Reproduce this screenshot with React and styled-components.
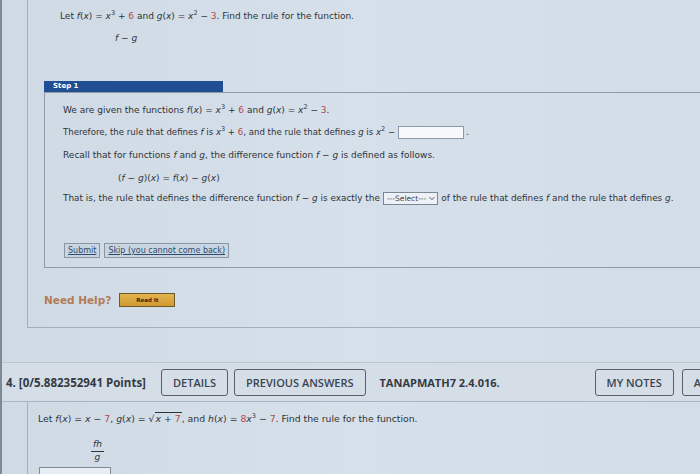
import React from 'react';
import styled, { createGlobalStyle } from 'styled-components';

const GlobalStyle = createGlobalStyle`
  html, body {
    margin: 0;
    padding: 0;
    background: #d2dde8;
  }
  body {
    font-family: "DejaVu Sans", Verdana, sans-serif;
    color: #2f3338;
  }
`;

const Page = styled.div`
  width: 700px;
  height: 474px;
  overflow: hidden;
  box-sizing: border-box;
  border-left: 2px solid #7d8996;
  background: linear-gradient(90deg, #cfdae5 0%, #d6e0ea 50%, #d2dde8 100%);
`;

const Panel = styled.div`
  margin-left: 25px;
  height: 328px;
  box-sizing: border-box;
  border-left: 1px solid #a4afba;
  border-bottom: 1px solid #a4afba;
  padding: 11px 0 0 32px;
`;

const Text = styled.div`
  font-size: ${p => p.$size || 9}px;
  line-height: 11px;
  margin: ${p => p.$m || '0'};
  padding-left: ${p => p.$indent || 0}px;
  white-space: nowrap;
`;

const I = styled.i`
  font-style: italic;
`;

const Red = styled.span`
  color: #b5464f;
`;

const Sup = styled.sup`
  font-size: 6.5px;
  line-height: 0;
  vertical-align: 4px;
`;

const StepBox = styled.div`
  margin: 37px 0 0 -16px;
`;

const StepTab = styled.div`
  width: 179px;
  height: 11px;
  background: #1f4f92;
  color: #fff;
  font-size: 7px;
  font-weight: bold;
  line-height: 11px;
  padding-left: 9px;
  box-sizing: border-box;
`;

const StepBody = styled.div`
  border-top: 1px solid #8e9aa6;
  border-left: 1px solid #8e9aa6;
  border-bottom: 1px solid #8e9aa6;
  height: 176px;
  box-sizing: border-box;
  padding: 12px 0 0 18px;
`;

const Blank = styled.span`
  display: inline-block;
  width: 66px;
  height: 13px;
  box-sizing: border-box;
  background: #f6f8fa;
  border: 1px solid #8d99a6;
  vertical-align: middle;
  margin: -3px 2px -3px 3px;
`;

const Select = styled.span`
  display: inline-flex;
  align-items: center;
  gap: 3px;
  height: 13px;
  box-sizing: border-box;
  padding: 0 2px 0 3px;
  border: 1px solid #7a8896;
  background: #eef2f6;
  font-size: 7.5px;
  vertical-align: middle;
  margin: -3px 3px;
  color: #3a3f46;
`;

const ButtonRow = styled.div`
  display: flex;
  gap: 4px;
  margin-top: 39px;
  margin-left: 1px;
`;

const SmallButton = styled.span`
  display: inline-block;
  padding: 0 3px;
  height: 13px;
  line-height: 13px;
  font-size: 8px;
  color: #2e4a70;
  text-decoration: underline;
  background: #c9d5e0;
  border: 1px solid #8896a5;
`;

const HelpRow = styled.div`
  display: flex;
  align-items: center;
  gap: 8px;
  margin: 25px 0 0 -16px;
`;

const HelpLabel = styled.span`
  font-family: "DejaVu Sans", sans-serif;
  font-weight: bold;
  font-size: 10.5px;
  color: #b27c58;
`;

const ReadIt = styled.span`
  display: inline-block;
  width: 56px;
  height: 14px;
  box-sizing: border-box;
  border: 1px solid #6d5a2a;
  background: linear-gradient(#e2b450, #d19a32);
  font-size: 5.5px;
  font-weight: bold;
  text-align: center;
  line-height: 12px;
  color: #3a2a10;
`;

const QHeader = styled.div`
  margin-top: 34px;
  width: 820px;
  height: 38px;
  display: flex;
  align-items: center;
  border-top: 1px solid #bcc6d0;
  border-bottom: 1px solid #a9b4bf;
  background: #d5dee7;
  font-family: "Open Sans", sans-serif;
  color: #343a42;
  padding-left: 4px;
`;

const QTitle = styled.span`
  font-weight: bold;
  font-size: 11.5px;
  width: 155px;
  flex-shrink: 0;
`;

const HeaderButton = styled.span`
  display: inline-flex;
  align-items: center;
  justify-content: center;
  height: 27px;
  box-sizing: border-box;
  padding: 0 11px;
  margin-right: ${p => p.$mr || 6}px;
  border: 1.5px solid #56606b;
  border-radius: 3px;
  font-size: 11px;
  font-weight: 600;
  color: #3a4451;
  white-space: nowrap;
  flex-shrink: 0;
`;

const Code = styled.span`
  font-weight: bold;
  font-size: 11px;
  margin-left: 8px;
  width: 215px;
  flex-shrink: 0;
`;

const QBody = styled.div`
  margin-left: 25px;
  border-left: 1px solid #a4afba;
  height: 80px;
  padding: 11px 0 0 10px;
`;

const Sqrt = styled.span`
  white-space: nowrap;
`;

const Radicand = styled.span`
  border-top: 1px solid #2f3338;
  padding: 0 1px;
`;

const Frac = styled.div`
  display: inline-flex;
  flex-direction: column;
  align-items: center;
  margin: 15px 0 0 53px;
  font-size: 9px;
  font-style: italic;
  line-height: 11px;
`;

const FracTop = styled.span`
  border-bottom: 1px solid #2f3338;
  padding: 0 2px 1px;
`;

const AnswerBox = styled.div`
  width: 70px;
  height: 14px;
  margin: 4px 0 0 1px;
  border: 1px solid #7e8a97;
  background: #e8edf2;
`;

const Chevron = () => (
  <svg width="6" height="5" viewBox="0 0 6 5">
    <path d="M0.5 1 L3 3.8 L5.5 1" fill="none" stroke="#4a5868" strokeWidth="0.9" />
  </svg>
);

export default function App() {
  return (
    <>
      <GlobalStyle />
      <Page>
        <Panel>
          <Text>
            Let <I>f</I>(<I>x</I>) = <I>x</I><Sup>3</Sup> + <Red>6</Red> and <I>g</I>(<I>x</I>) = <I>x</I><Sup>2</Sup> − <Red>3</Red>. Find the rule for the function.
          </Text>
          <Text $m="11px 0 0 0" $indent={55}>
            <I>f</I> − <I>g</I>
          </Text>
          <StepBox>
            <StepTab>Step 1</StepTab>
            <StepBody>
              <Text>
                We are given the functions <I>f</I>(<I>x</I>) = <I>x</I><Sup>3</Sup> + <Red>6</Red> and <I>g</I>(<I>x</I>) = <I>x</I><Sup>2</Sup> − <Red>3</Red>.
              </Text>
              <Text $m="11px 0 0 0" $size={8.6}>
                Therefore, the rule that defines <I>f</I> is <I>x</I><Sup>3</Sup> + <Red>6</Red>, and the rule that defines <I>g</I> is <I>x</I><Sup>2</Sup> −<Blank />.
              </Text>
              <Text $m="12px 0 0 0">
                Recall that for functions <I>f</I> and <I>g</I>, the difference function <I>f</I> − <I>g</I> is defined as follows.
              </Text>
              <Text $m="12px 0 0 0" $indent={55}>
                (<I>f</I> − <I>g</I>)(<I>x</I>) = <I>f</I>(<I>x</I>) − <I>g</I>(<I>x</I>)
              </Text>
              <Text $m="9px 0 0 0" $size={8.9}>
                That is, the rule that defines the difference function <I>f</I> − <I>g</I> is exactly the
                <Select>---Select--- <Chevron /></Select>
                of the rule that defines <I>f</I> and the rule that defines <I>g</I>.
              </Text>
              <ButtonRow>
                <SmallButton>Submit</SmallButton>
                <SmallButton>Skip (you cannot come back)</SmallButton>
              </ButtonRow>
            </StepBody>
          </StepBox>
          <HelpRow>
            <HelpLabel>Need Help?</HelpLabel>
            <ReadIt>Read It</ReadIt>
          </HelpRow>
        </Panel>
        <QHeader>
          <QTitle>4. [0/5.882352941 Points]</QTitle>
          <HeaderButton>DETAILS</HeaderButton>
          <HeaderButton>PREVIOUS ANSWERS</HeaderButton>
          <Code>TANAPMATH7 2.4.016.</Code>
          <HeaderButton $mr={8}>MY NOTES</HeaderButton>
          <HeaderButton>ASK YOUR TEACHER</HeaderButton>
        </QHeader>
        <QBody>
          <Text $size={9.3}>
            Let <I>f</I>(<I>x</I>) = <I>x</I> − <Red>7</Red>, <I>g</I>(<I>x</I>) = <Sqrt>√<Radicand><I>x</I> + <Red>7</Red></Radicand></Sqrt>, and <I>h</I>(<I>x</I>) = <Red>8</Red><I>x</I><Sup>3</Sup> − <Red>7</Red>. Find the rule for the function.
          </Text>
          <Frac>
            <FracTop>fh</FracTop>
            <span>g</span>
          </Frac>
          <AnswerBox />
        </QBody>
      </Page>
    </>
  );
}
